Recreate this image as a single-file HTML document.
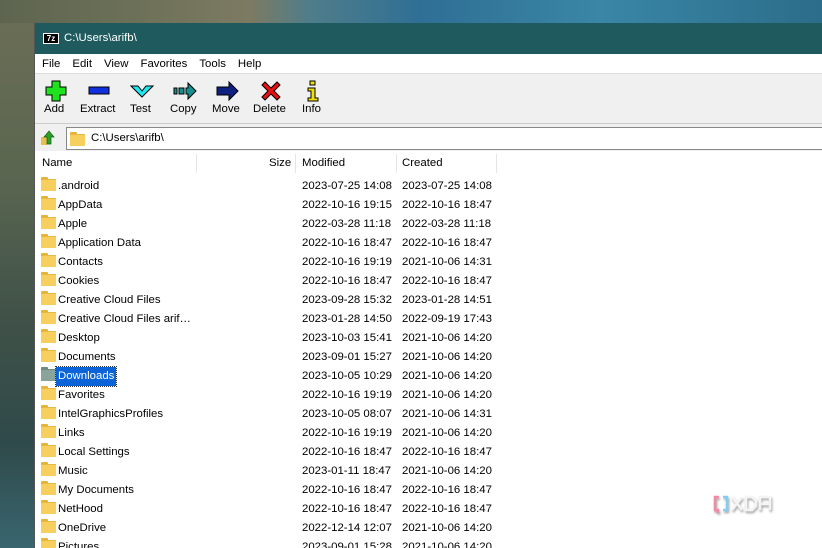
<!DOCTYPE html>
<html><head><style>
*{margin:0;padding:0;box-sizing:border-box}
html,body{width:822px;height:548px;overflow:hidden}
body{position:relative;font-family:"Liberation Sans",sans-serif;font-size:11.4px;color:#000;
background:linear-gradient(90deg,#5d6550 0,#6b6f57 120px,#7d7a62 250px,#4f7d8a 310px,#2f6f95 420px,#3a86a6 600px,#2b6d8a 822px);}
.left{position:absolute;left:0;top:23px;width:34px;height:525px;background:linear-gradient(180deg,#6a6d55 0,#5a6650 150px,#3f5148 300px,#2f4a4a 420px,#3c6c78 548px)}
.win{position:absolute;left:34px;top:23px;width:788px;height:525px;background:#fff;border-left:1px solid #555;overflow:hidden}
.title{height:31px;background:#1f5b5e;color:#fff;line-height:31px;padding-left:29px;position:relative}
.logo{position:absolute;left:8px;top:10px;width:16px;height:11px;background:#000;border:1px solid #fff;color:#fff;font-size:8px;line-height:9px;text-align:center;font-weight:bold}
.menu{height:20px;line-height:20px;background:#fff;border-bottom:1px solid #ddd}
.menu span{margin-left:7px;margin-right:5px}
.tb{height:50px;background:#f0f0f0;position:relative;border-bottom:1px solid #ccc}
.tb div{position:absolute;top:35px;transform:translateY(-50%)}
.tb svg{position:absolute;top:6px}
.addr{height:27px;background:#f0f0f0;position:relative}
.addr .box{position:absolute;left:31px;top:3px;right:0;height:23px;background:#fff;border:1px solid #888;border-right:none;padding-left:24px;line-height:21px}
.hdr{position:absolute;top:130px;left:0;right:0;height:21px;line-height:21px;background:#fff}
.hdr span{position:absolute;top:0}
.sep{position:absolute;top:1px;width:1px;height:19px;background:#e5e5e5}
.row{position:absolute;left:0;height:19px;line-height:19px;width:100%}
.row span{position:absolute;top:0}
.f{position:absolute;left:6px;top:3px;width:15px;height:13px}
.f:before{content:"";position:absolute;left:0;top:0;width:7px;height:4px;background:#e3b33c;border-radius:1px 1px 0 0}
.f:after{content:"";position:absolute;left:0;top:2px;width:15px;height:11px;background:#f6cf5e;border-top:1px solid #e8b840}
.sel:before{background:#6f8a84}.sel:after{background:#8aa39b;border-top-color:#6f8a84}
</style></head><body>
<div class="left"></div>
<div class="win">
<div class="title"><div class="logo">7z</div>C:\Users\arifb\</div>
<div class="menu"><span>File</span><span>Edit</span><span>View</span><span>Favorites</span><span>Tools</span><span>Help</span></div>
<div class="tb">
<svg style="left:10px" width="22" height="22"><path d="M7 1h8v6h6v8h-6v6H7v-6H1V7h6z" fill="#1fe21f" stroke="#000" stroke-width="1"/></svg>
<svg style="left:53px" width="22" height="22"><rect x="1" y="7" width="20" height="7" fill="#1030e0" stroke="#000"/></svg>
<svg style="left:95px" width="24" height="22"><path d="M1 6h7l4 5 4-5h7l-11 11z" fill="#20e8f0" stroke="#000"/></svg>
<svg style="left:138px" width="24" height="22"><path d="M1 8h3v6H1zM6 8h5v6H6zM13 8h2V3l8 8-8 8v-5h-2z" fill="#159090" stroke="#000"/></svg>
<svg style="left:181px" width="24" height="22"><path d="M1 7h12V2l9 9-9 9v-5H1z" fill="#102080" stroke="#000"/></svg>
<svg style="left:225px" width="22" height="22"><path d="M2 5l3-3 6 6 6-6 3 3-6 6 6 6-3 3-6-6-6 6-3-3 6-6z" fill="#e81010" stroke="#000"/></svg>
<svg style="left:268px" width="22" height="22"><rect x="7" y="1" width="5" height="4" fill="#f0e000" stroke="#000"/><path d="M5 8h7v10h3v3H5v-3h3v-7H5z" fill="#f0e000" stroke="#000"/></svg>
<div style="left:9px">Add</div><div style="left:45px">Extract</div><div style="left:95px">Test</div><div style="left:135px">Copy</div><div style="left:177px">Move</div><div style="left:218px">Delete</div><div style="left:267px">Info</div>
</div>
<div class="addr"><svg style="position:absolute;left:5px;top:6px" width="15" height="16"><path d="M1 7h6v8H1z" fill="#e8c050"/><path d="M7 14V7H4l5-6 5 6h-3v7z" fill="#2aa02a" stroke="#106010" stroke-width=".7"/></svg><div class="box"><span class="f" style="left:3px;top:4px"></span>C:\Users\arifb\</div></div>
<div class="hdr"><span style="left:7px">Name</span><div class="sep" style="left:161px"></div><span style="left:234px">Size</span><div class="sep" style="left:260px"></div><span style="left:267px">Modified</span><div class="sep" style="left:361px"></div><span style="left:367px">Created</span><div class="sep" style="left:461px"></div></div>
<div id="rows"></div>
</div>
<svg style="position:absolute;left:712px;top:493px;filter:drop-shadow(1px 2px 1px rgba(0,0,0,.35))" width="80" height="26"><g fill="none" stroke-width="2.5"><path d="M7 4H3v13h3v3" stroke="#f08aa6"/><path d="M11 4h4v13h-4" stroke="#7fd0f4"/><g stroke="#f4f4f4"><path d="M20 4l10 13M30 4L20 17M34 4h6l4 4v5l-4 4h-6zM48 17V4h10v13M48 11h10"/></g></g></svg>
<script>
var d=[[".android","2023-07-25 14:08","2023-07-25 14:08"],["AppData","2022-10-16 19:15","2022-10-16 18:47"],["Apple","2022-03-28 11:18","2022-03-28 11:18"],["Application Data","2022-10-16 18:47","2022-10-16 18:47"],["Contacts","2022-10-16 19:19","2021-10-06 14:31"],["Cookies","2022-10-16 18:47","2022-10-16 18:47"],["Creative Cloud Files","2023-09-28 15:32","2023-01-28 14:51"],["Creative Cloud Files arif…","2023-01-28 14:50","2022-09-19 17:43"],["Desktop","2023-10-03 15:41","2021-10-06 14:20"],["Documents","2023-09-01 15:27","2021-10-06 14:20"],["Downloads","2023-10-05 10:29","2021-10-06 14:20"],["Favorites","2022-10-16 19:19","2021-10-06 14:20"],["IntelGraphicsProfiles","2023-10-05 08:07","2021-10-06 14:31"],["Links","2022-10-16 19:19","2021-10-06 14:20"],["Local Settings","2022-10-16 18:47","2022-10-16 18:47"],["Music","2023-01-11 18:47","2021-10-06 14:20"],["My Documents","2022-10-16 18:47","2022-10-16 18:47"],["NetHood","2022-10-16 18:47","2022-10-16 18:47"],["OneDrive","2022-12-14 12:07","2021-10-06 14:20"],["Pictures","2023-09-01 15:28","2021-10-06 14:20"]];
var h="";d.forEach(function(r,i){var s=r[0]=="Downloads";h+='<div class="row" style="top:'+(154+i*19)+'px"><span class="f'+(s?' sel':'')+'"></span><span style="left:23px;'+(s?'background:#0a64d8;color:#fff;outline:1px dotted #333;padding:0 2px;left:21px':'')+'">'+r[0]+'</span><span style="left:267px">'+r[1]+'</span><span style="left:367px">'+r[2]+'</span></div>'});
document.getElementById("rows").innerHTML=h;
</script>
</body></html>
